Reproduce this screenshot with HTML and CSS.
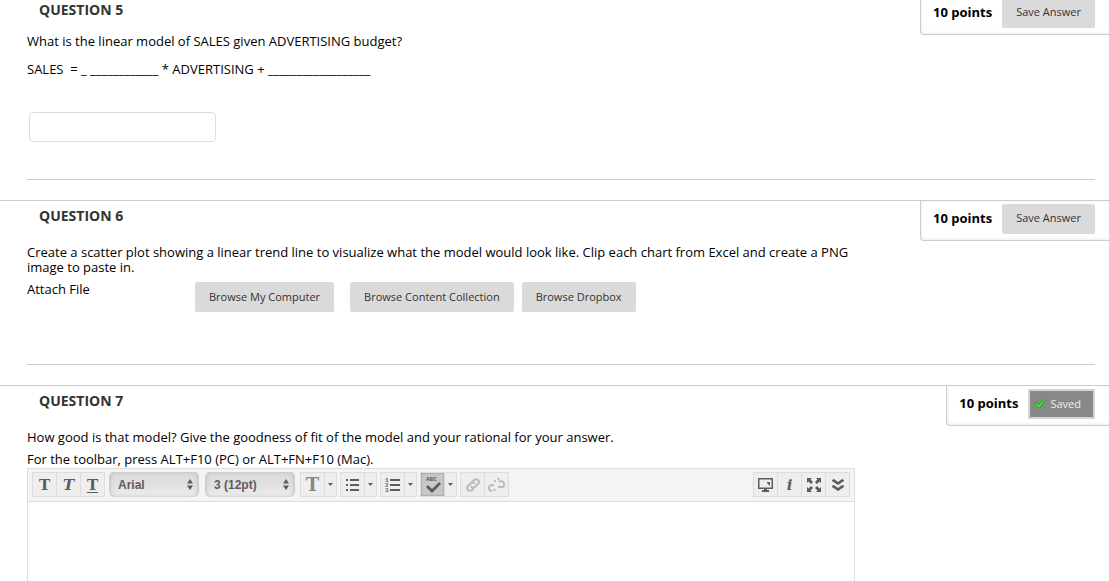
FILE: index.html
```
<!DOCTYPE html>
<html lang="en">
<head>
	<meta charset="UTF-8">
	<meta name="viewport" content="width=device-width, initial-scale=1">
	<title>Take Test</title>
	<link rel="stylesheet" href="styles.css">
</head>
<body>
	<form class="questions" action="#" method="post">
		<section class="question">
			<div class="question-header">
				<h3>QUESTION 5</h3>
				<div class="points">
					<span>10 points</span>
					<button type="button" class="btn">Save Answer</button>
				</div>
			</div>
			<div class="question-body short">
				<p>What is the linear model of SALES given ADVERTISING budget?</p>
				<p class="formula">SALES&nbsp; = _ ____________ * ADVERTISING + __________________</p>
				<input type="text" class="answer" name="answer5" aria-label="Question 5 answer">
			</div>
			<hr>
		</section>

		<section class="question">
			<div class="question-header">
				<h3>QUESTION 6</h3>
				<div class="points">
					<span>10 points</span>
					<button type="button" class="btn">Save Answer</button>
				</div>
			</div>
			<div class="question-body">
				<p>Create a scatter plot showing a linear trend line to visualize what the model would look like. Clip each chart from Excel and create a PNG image to paste in.</p>
				<div class="attach">
					<span class="attach-label">Attach File</span>
					<button type="button" class="btn local">Browse My Computer</button>
					<button type="button" class="btn">Browse Content Collection</button>
					<button type="button" class="btn">Browse Dropbox</button>
				</div>
			</div>
			<hr>
		</section>

		<section class="question last">
			<div class="question-header">
				<h3>QUESTION 7</h3>
				<div class="points">
					<span>10 points</span>
					<button type="button" class="btn saved">
						<svg width="12" height="10" viewBox="0 0 12 10"><path d="M.5 5L2.500 3.500l2 2L10 .5l1.500 1L5 9.500z" fill="#3be03b" stroke="#0a9a0a" stroke-width=".7"/></svg>
						Saved
					</button>
				</div>
			</div>
			<div class="question-body">
				<p>How good is that model? Give the goodness of fit of the model and your rational for your answer.</p>
				<p class="hint">For the toolbar, press ALT+F10 (PC) or ALT+FN+F10 (Mac).</p>
				<div class="editor">
					<div class="toolbar">
						<div class="group">
							<button type="button" class="tool glyph" title="Bold">T</button>
							<button type="button" class="tool glyph italic" title="Italic">T</button>
							<button type="button" class="tool glyph underline" title="Underline">T</button>
						</div>
						<div class="select">
							<select name="font" aria-label="Font family">
								<option>Arial</option>
								<option>Courier</option>
								<option>Times</option>
							</select>
							<svg width="6" height="11" viewBox="0 0 6 11"><path d="M3 0l3 4.500H0zM0 6.500h6L3 11z"/></svg>
						</div>
						<div class="select">
							<select name="size" aria-label="Font size">
								<option>3 (12pt)</option>
								<option>4 (14pt)</option>
								<option>5 (18pt)</option>
							</select>
							<svg width="6" height="11" viewBox="0 0 6 11"><path d="M3 0l3 4.500H0zM0 6.500h6L3 11z"/></svg>
						</div>
						<div class="group">
							<button type="button" class="tool glyph light" title="Text color">T</button>
							<button type="button" class="tool arrow" title="More colors"><svg width="5" height="3" viewBox="0 0 5 3"><path d="M0 0h5L2.500 3z"/></svg></button>
						</div>
						<div class="group">
							<button type="button" class="tool" title="Bulleted list"><svg width="16" height="14" viewBox="0 0 16 14"><path d="M1 1h2v2H1zM1 6h2v2H1zM1 11h2v2H1zM5 1h9v2H5zM5 6h9v2H5zM5 11h9v2H5z"/></svg></button>
							<button type="button" class="tool arrow" title="List styles"><svg width="5" height="3" viewBox="0 0 5 3"><path d="M0 0h5L2.500 3z"/></svg></button>
						</div>
						<div class="group">
							<button type="button" class="tool" title="Numbered list"><svg width="16" height="16" viewBox="0 0 16 16"><text x="0" y="5">1</text><text x="0" y="10">2</text><text x="0" y="15">3</text><path d="M5 2h10v2H5zM5 7h10v2H5zM5 12h10v2H5z"/></svg></button>
							<button type="button" class="tool arrow" title="List styles"><svg width="5" height="3" viewBox="0 0 5 3"><path d="M0 0h5L2.500 3z"/></svg></button>
						</div>
						<div class="group">
							<button type="button" class="tool active" title="Spell check"><svg width="18" height="18" viewBox="0 0 18 18"><text x="2" y="5">ABC</text><path d="M2 11l2-2 4 4 7-7 2 2-9 9z"/></svg></button>
							<button type="button" class="tool arrow" title="Language"><svg width="5" height="3" viewBox="0 0 5 3"><path d="M0 0h5L2.500 3z"/></svg></button>
						</div>
						<div class="group">
							<button type="button" class="tool" title="Link" disabled><svg width="16" height="16" viewBox="0 0 16 16"><g class="line"><path d="M7 5l2-2a2.600 2.600 0 0 1 4 4l-3 3a2.600 2.600 0 0 1-4-1"/><path d="M9 11l-2 2a2.600 2.600 0 0 1-4-4l3-3a2.600 2.600 0 0 1 4 1"/></g></svg></button>
							<button type="button" class="tool" title="Remove link" disabled><svg width="20" height="16" viewBox="0 0 20 16"><g class="line"><path d="M7 8H5a3 3 0 0 0 0 6M8 12l-1 2M12 5a3 3 0 1 1 4 5h-3M11 9l2 2M8 3v2M12 1l-1 2"/></g></svg></button>
						</div>
						<div class="group right">
							<button type="button" class="tool" title="Preview"><svg width="16" height="16" viewBox="0 0 16 16"><path fill-rule="evenodd" d="M0 1h15v11H0zM1.500 2.500v8h12v-8zM9 5h3v4l-1-1-2-2zM6 12h3v1h2v2H4v-2h2z"/></svg></button>
							<button type="button" class="tool glyph italic" title="Help">i</button>
							<button type="button" class="tool" title="Full screen"><svg width="16" height="16" viewBox="0 0 16 16"><path d="M1 1h5L4.500 2.500 7 5 5 7 2.500 4.500 1 6zM15 1v5l-1.500-1.500L11 7 9 5l2.500-2.500L10 1zM1 15v-5l1.500 1.500L5 9l2 2-2.500 2.500L6 15zM15 15h-5l1.500-1.500L9 11l2-2 2.500 2.500L15 10z"/></svg></button>
							<button type="button" class="tool" title="Show more"><svg width="14" height="14" viewBox="0 0 14 14"><path d="M1 2l2-1 4 3 4-3 2 1v1L7 7 1 3zM1 8l2-1 4 3 4-3 2 1v1l-6 4-6-4z"/></svg></button>
						</div>
					</div>
					<textarea name="answer7" aria-label="Question 7 answer"></textarea>
				</div>
			</div>
		</section>
	</form>
</body>
</html>
```
FILE: styles.css
```
* {
	box-sizing: border-box;
}
body {
	margin: 0;
	background: #fff;
	color: #000;
	font: 13px/15px "Open Sans", "Noto Sans", sans-serif;
}
button, input, select, textarea {
	font: inherit;
	margin: 0;
}
svg {
	display: block;
	fill: #5c5c5c;
}
/* the first question starts just above the fold */
.questions {
	display: flex;
	flex-direction: column;
	min-height: calc(100vh + 6px);
	margin-top: -6px;
}
.question {
	border-top: 1px solid #ccc;
	padding-bottom: 20px;
}
.question-header {
	display: flex;
	justify-content: space-between;
	align-items: flex-start;
	height: 44px;
}
h3 {
	margin: 0;
	padding: 6px 0 0 39px;
	color: #333;
	font-size: 14px;
	line-height: 18px;
}
.points {
	display: flex;
	align-items: center;
	gap: 10px;
	height: 40px;
	padding: 0 14px 4px 12px;
	border: 1px solid #ccc;
	border-width: 0 0 1px 1px;
	border-radius: 0 0 0 4px;
	box-shadow: inset 1px -1px 3px #eee;
	font-weight: bold;
}
.btn {
	height: 30px;
	padding: 0 14px 2px;
	border: 0;
	border-radius: 2px;
	background: #dadada;
	color: #333;
	font-size: 11px;
	font-weight: normal;
	cursor: pointer;
}
.saved {
	display: flex;
	align-items: center;
	gap: 4px;
	padding: 0 12px 0 4px;
	border: 2px solid #d4d4d4;
	border-radius: 0;
	background: #888;
	color: #eee;
}
.question-body {
	max-width: 855px;
	padding-left: 27px;
}
p {
	margin: 0 0 7px;
}
.short {
	margin-top: -5px;
}
.formula {
	margin-top: 13px;
}
.answer {
	display: block;
	width: 187px;
	height: 30px;
	margin: 35px 0 37px 2px;
	padding: 0 8px;
	border: 1px solid #ddd;
	border-radius: 4px;
}
.attach {
	display: flex;
	gap: 8px;
	margin-bottom: 52px;
}
.attach-label {
	width: 160px;
}
.local {
	margin-right: 8px;
}
hr {
	height: 1px;
	margin: 0 14px 0 27px;
	border: 0;
	background: #ccc;
}
.last {
	display: flex;
	flex: 1;
	flex-direction: column;
	padding-bottom: 0;
}
.last .question-body {
	display: flex;
	flex: 1;
	flex-direction: column;
}
.hint {
	margin-bottom: 1px;
}
.editor {
	display: flex;
	flex: 1;
	flex-direction: column;
	border: 1px solid #ddd;
	border-bottom: 0;
}
.toolbar {
	display: flex;
	gap: 3px;
	padding: 3px 4px 4px;
	border-bottom: 1px solid #ddd;
	background: #f4f4f4;
}
.group {
	display: flex;
	border: 1px solid #ddd;
	border-right: 0;
}
.right {
	margin-left: auto;
}
.tool {
	display: flex;
	align-items: center;
	justify-content: center;
	width: 24px;
	height: 23px;
	padding: 0;
	border: 0;
	border-right: 1px solid #ddd;
	background: #eee;
	color: #5c5c5c;
}
.arrow {
	width: 12px;
}
.glyph {
	font: bold 15px/18px "DejaVu Serif", serif;
}
.italic {
	font-style: italic;
}
.underline {
	text-decoration: underline;
	text-underline-offset: 2px;
}
.light {
	color: #888;
	font-size: 18px;
}
.active {
	background: #c8c8c8;
	box-shadow: inset 0 0 2px #777;
}
.tool text {
	font: bold 6px "Liberation Mono", monospace;
}
.line {
	fill: none;
	stroke: #bbb;
	stroke-width: 2;
}
.select {
	position: relative;
	width: 90px;
	margin: 0 2px 0 1px;
}
.select select {
	width: 100%;
	height: 25px;
	padding: 0 8px;
	border: 1px solid #ccc;
	border-width: 0 1px;
	border-radius: 5px;
	background: linear-gradient(#dadada, #e2e2e2 60%, #f0f0f0);
	box-shadow: inset 0 0 4px #bbb;
	color: #5c5c5c;
	font: bold 12px/16px "Liberation Sans", sans-serif;
	appearance: none;
}
.select svg {
	position: absolute;
	top: 7px;
	right: 6px;
	pointer-events: none;
}
textarea {
	flex: 1;
	border: 0;
	resize: none;
	outline: 0;
}
```
